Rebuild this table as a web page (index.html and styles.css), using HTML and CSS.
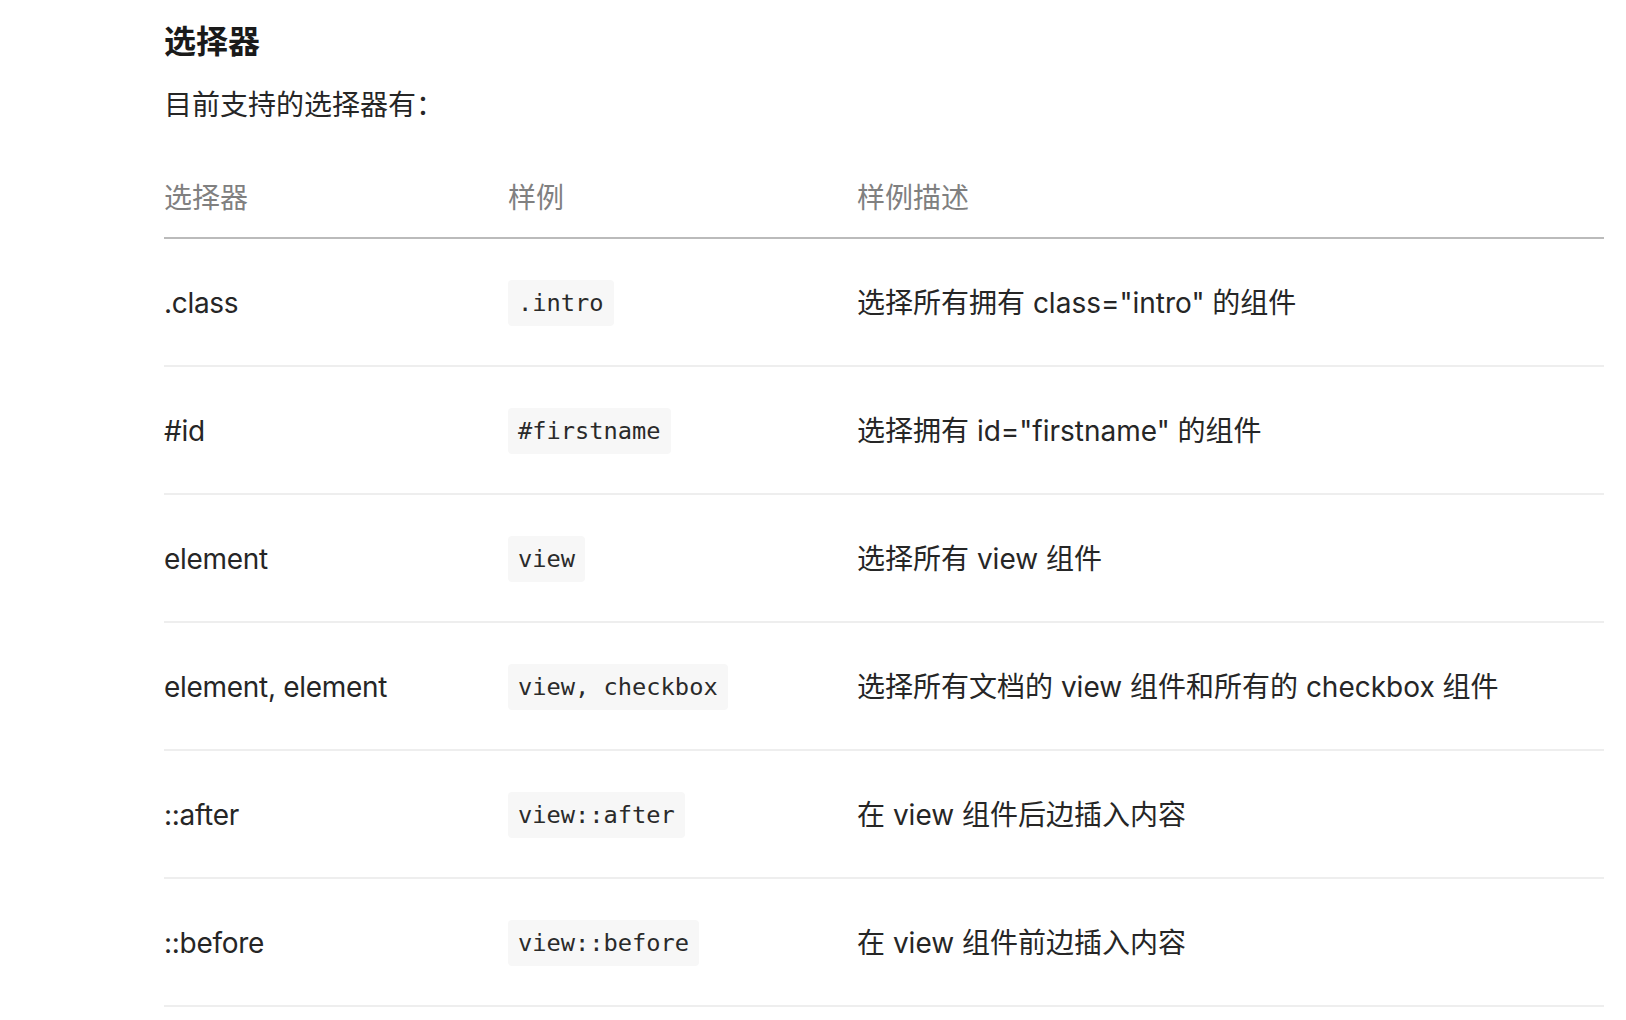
FILE: index.html
```html
<!DOCTYPE html>
<html lang="zh-CN">
<head>
<meta charset="utf-8">
<title>选择器</title>
<link rel="stylesheet" href="styles.css">
</head>
<body>
<main class="doc">
  <h2 class="doc-title">选择器</h2>
  <p class="doc-intro">目前支持的选择器有：</p>
  <div class="sel-table">
    <div class="row head">
      <div class="cell">选择器</div>
      <div class="cell">样例</div>
      <div class="cell">样例描述</div>
    </div>
    <div class="row">
      <div class="cell name">.class</div>
      <div class="cell"><code class="code">.intro</code></div>
      <div class="cell">选择所有拥有 class="intro" 的组件</div>
    </div>
    <div class="row">
      <div class="cell name">#id</div>
      <div class="cell"><code class="code">#firstname</code></div>
      <div class="cell">选择拥有 id="firstname" 的组件</div>
    </div>
    <div class="row">
      <div class="cell name">element</div>
      <div class="cell"><code class="code">view</code></div>
      <div class="cell">选择所有 view 组件</div>
    </div>
    <div class="row">
      <div class="cell name">element, element</div>
      <div class="cell"><code class="code">view, checkbox</code></div>
      <div class="cell">选择所有文档的 view 组件和所有的 checkbox 组件</div>
    </div>
    <div class="row">
      <div class="cell name">::after</div>
      <div class="cell"><code class="code">view::after</code></div>
      <div class="cell">在 view 组件后边插入内容</div>
    </div>
    <div class="row">
      <div class="cell name">::before</div>
      <div class="cell"><code class="code">view::before</code></div>
      <div class="cell">在 view 组件前边插入内容</div>
    </div>
  </div>
</main>
</body>
</html>
```

FILE: styles.css
```css
html, body {
  margin: 0;
  padding: 0;
  background: #ffffff;
}

body {
  font-family: "Inter", "Noto Sans CJK SC", sans-serif;
  color: #262626;
  font-size: 28px;
}

.doc {
  padding: 20px 22px 0 164px;
}

.doc-title {
  margin: 0;
  font-size: 32px;
  line-height: 44px;
  font-weight: 600;
  color: #1a1a1a;
}

.doc-intro {
  margin: 19px 0 0;
  line-height: 44px;
  font-size: 28px;
}

.sel-table {
  margin-top: 30px;
  width: 1440px;
}

.row {
  display: grid;
  grid-template-columns: 344px 349px 1fr;
  align-items: center;
  height: 126px;
  border-bottom: 2px solid #eeeeee;
}

.row.head {
  height: 80px;
  border-bottom-color: #bbbbbb;
  color: #808080;
}

.cell {
  line-height: 40px;
  padding-top: 2px;
  white-space: nowrap;
}

.cell.name {
  letter-spacing: -0.3px;
}

.code {
  display: inline-block;
  font-family: "DejaVu Sans Mono", monospace;
  font-size: 23.7px;
  line-height: 30px;
  padding: 8px 10px;
  background: #f7f7f7;
  border-radius: 4px;
  color: #2a2a2a;
  vertical-align: middle;
}
```
